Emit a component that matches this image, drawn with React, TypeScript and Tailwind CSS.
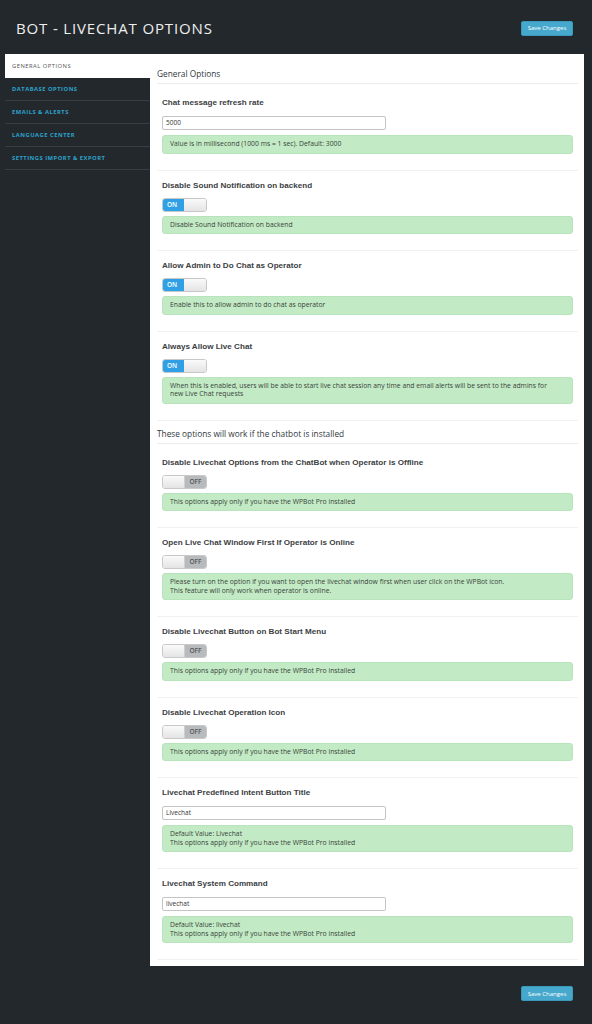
import React from "react";

type Item = {
  label: string;
  kind: "input" | "on" | "off";
  value?: string;
  help: React.ReactNode;
  first?: boolean;
};

const general: Item[] = [
  {
    label: "Chat message refresh rate",
    kind: "input",
    value: "5000",
    help: "Value is in millisecond (1000 ms = 1 sec). Default: 3000",
    first: true,
  },
  {
    label: "Disable Sound Notification on backend",
    kind: "on",
    help: "Disable Sound Notification on backend",
  },
  {
    label: "Allow Admin to Do Chat as Operator",
    kind: "on",
    help: "Enable this to allow admin to do chat as operator",
  },
  {
    label: "Always Allow Live Chat",
    kind: "on",
    help: (
      <>
        When this is enabled, users will be able to start live chat session any time and email alerts will be sent to the admins for
        <br />
        new Live Chat requests
      </>
    ),
  },
];

const chatbot: Item[] = [
  {
    label: "Disable Livechat Options from the ChatBot when Operator is Offline",
    kind: "off",
    help: "This options apply only if you have the WPBot Pro installed",
    first: true,
  },
  {
    label: "Open Live Chat Window First If Operator is Online",
    kind: "off",
    help: (
      <>
        Please turn on the option if you want to open the livechat window first when user click on the WPBot icon.
        <br />
        This feature will only work when operator is online.
      </>
    ),
  },
  {
    label: "Disable Livechat Button on Bot Start Menu",
    kind: "off",
    help: "This options apply only if you have the WPBot Pro installed",
  },
  {
    label: "Disable Livechat Operation Icon",
    kind: "off",
    help: "This options apply only if you have the WPBot Pro installed",
  },
  {
    label: "Livechat Predefined Intent Button Title",
    kind: "input",
    value: "Livechat",
    help: (
      <>
        Default Value: Livechat
        <br />
        This options apply only if you have the WPBot Pro installed
      </>
    ),
  },
  {
    label: "Livechat System Command",
    kind: "input",
    value: "livechat",
    help: (
      <>
        Default Value: livechat
        <br />
        This options apply only if you have the WPBot Pro installed
      </>
    ),
  },
];

const tabs = [
  "General Options",
  "Database Options",
  "Emails & Alerts",
  "Language Center",
  "Settings Import & Export",
];

function SaveButton() {
  return (
    <button className="h-[15px] w-[52px] rounded-[2px] border border-[#3a98bb] bg-[#45a8cc] text-[6px] leading-none text-white font-['Open_Sans',sans-serif]">
      Save Changes
    </button>
  );
}

function Toggle({ on }: { on: boolean }) {
  if (on) {
    return (
      <div className="flex h-[14px] w-[45px] overflow-hidden rounded-[3px] border border-[#c8c8c8]">
        <span className="flex w-[21px] items-center bg-[#2f9fe6] pl-[4px] text-[6.5px] font-semibold text-white">
          ON
        </span>
        <span className="flex-1 bg-gradient-to-b from-[#fafafa] to-[#e4e4e4]" />
      </div>
    );
  }
  return (
    <div className="flex h-[14px] w-[45px] overflow-hidden rounded-[3px] border border-[#c8c8c8]">
      <span className="w-[22px] border-r border-[#cfcfcf] bg-gradient-to-b from-[#fafafa] to-[#e4e4e4]" />
      <span className="flex flex-1 items-center justify-center bg-[#b8bbbe] text-[6.5px] font-semibold text-[#555]">
        OFF
      </span>
    </div>
  );
}

function Section({ item }: { item: Item }) {
  return (
    <div
      className={`${item.first ? "pt-[14px]" : "pt-[10px]"} border-b border-[#f1f1f1] px-[5px] pb-[16px]`}
    >
      <div
        className={`font-['Liberation_Sans',Arial,sans-serif] text-[8.1px] font-bold leading-[9px] text-[#3c4043] ${item.kind === "input" ? "mb-[9px]" : "mb-[8px]"}`}
      >
        {item.label}
      </div>
      {item.kind === "input" ? (
        <div className="mb-[5px] flex h-[14px] w-[224px] items-center rounded-[2px] border border-[#c4c4c4] px-[3px] text-[6.5px] text-[#333]">
          {item.value}
        </div>
      ) : (
        <div className="mb-[4px]">
          <Toggle on={item.kind === "on"} />
        </div>
      )}
      <div className="rounded-[3px] border border-[#b7e4bb] bg-[#c2ebc5] px-[7px] py-[4px] text-[6.8px] leading-[8.5px] text-[#3b3f3b]">
        {item.help}
      </div>
    </div>
  );
}

function Heading({ text }: { text: string }) {
  return (
    <div className="border-b border-[#ececec] pb-[4px] pt-[8px] text-[8.3px] font-medium leading-[10px] text-[#32373c]">
      {text}
    </div>
  );
}

export default function App() {
  return (
    <div className="min-h-screen bg-[#23282d] font-['Open_Sans',sans-serif]">
      <div className="flex h-[54px] items-center justify-between pl-[16px] pr-[19px] pt-[2px]">
        <h1 className="text-[15px] font-normal tracking-[0.85px] text-[#eeeeee]">
          BOT - LIVECHAT OPTIONS
        </h1>
        <SaveButton />
      </div>

      <div className="ml-[5px] flex">
        <div className="w-[145px]">
          {tabs.map((t, i) =>
            i === 0 ? (
              <div
                key={t}
                className="flex h-[24px] items-center bg-white pl-[7px] text-[5.8px] uppercase tracking-[0.5px] text-[#555]"
              >
                {t}
              </div>
            ) : (
              <div
                key={t}
                className="flex h-[23px] items-center border-b border-[#383e44] pl-[7px] text-[5.8px] font-bold uppercase tracking-[0.5px] text-[#2ea2cc]"
              >
                {t}
              </div>
            ),
          )}
        </div>

        <div className="w-[434px] bg-white pb-[6px] pl-[7px] pr-[6px] pt-[7px]">
          <Heading text="General Options" />
          {general.map((it) => (
            <Section key={it.label} item={it} />
          ))}
          <Heading text="These options will work if the chatbot is installed" />
          {chatbot.map((it) => (
            <Section key={it.label} item={it} />
          ))}
        </div>
      </div>

      <div className="flex justify-end pr-[19px] pt-[20px] pb-[26px]">
        <SaveButton />
      </div>
    </div>
  );
}
